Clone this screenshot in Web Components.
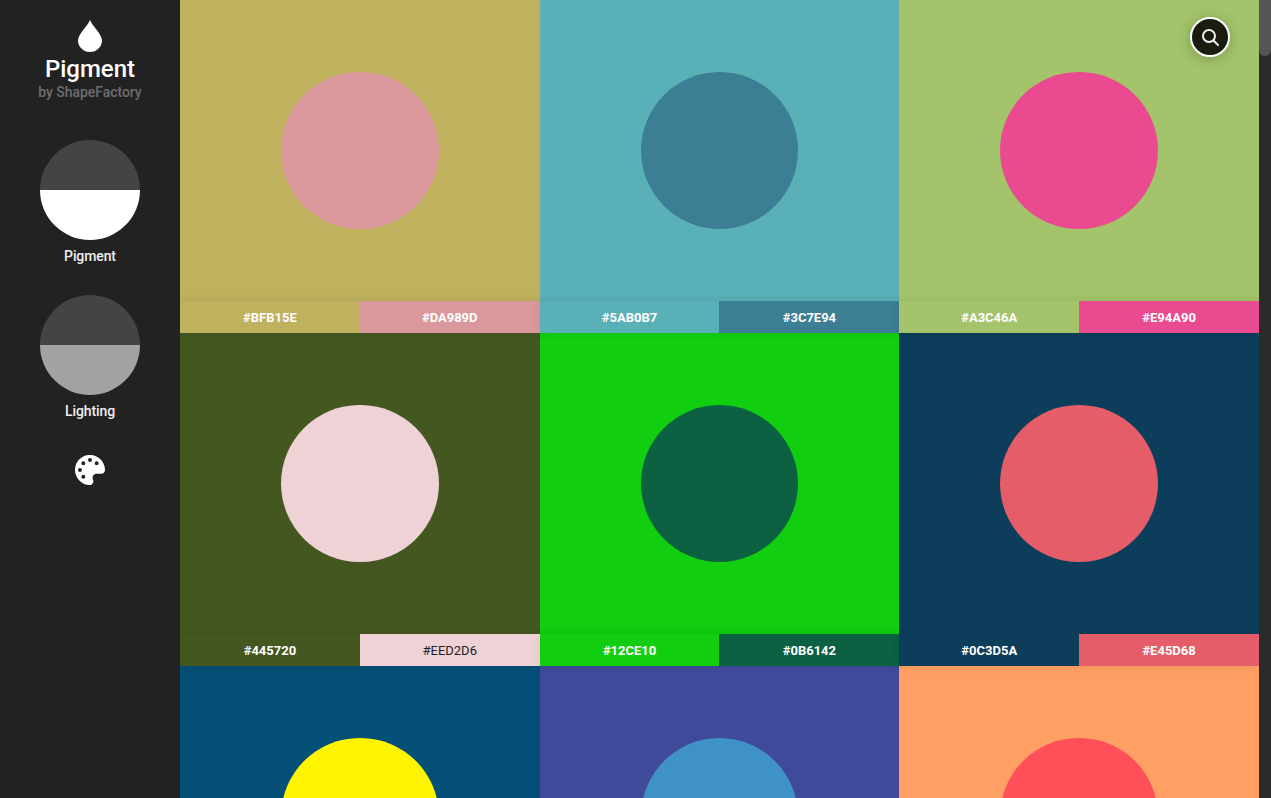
<!DOCTYPE html>
<html lang="en">
<head>
<meta charset="utf-8">
<title>Pigment by ShapeFactory</title>
<style>
html,body{margin:0;height:100%;overflow:hidden;background:#222;font-family:Roboto,"Liberation Sans",sans-serif}
</style>
</head>
<body>
<pigment-app>
  <pigment-sidebar slot="side">
    <pigment-logo></pigment-logo>
    <pigment-dial color="#fff">Pigment</pigment-dial>
    <pigment-dial color="#a2a2a2">Lighting</pigment-dial>
    <pigment-palette></pigment-palette>
  </pigment-sidebar>
  <pigment-grid slot="main">
    <pigment-card bg="#BFB15E" fg="#DA989D"></pigment-card>
    <pigment-card bg="#5AB0B7" fg="#3C7E94"></pigment-card>
    <pigment-card bg="#A3C46A" fg="#E94A90"></pigment-card>
    <pigment-card bg="#445720" fg="#EED2D6" fg-ink="#222"></pigment-card>
    <pigment-card bg="#12CE10" fg="#0B6142"></pigment-card>
    <pigment-card bg="#0C3D5A" fg="#E45D68"></pigment-card>
    <pigment-card bg="#034F75" fg="#FFF500" bare></pigment-card>
    <pigment-card bg="#3F4A9B" fg="#3F92C6" bare></pigment-card>
    <pigment-card bg="#FF9F63" fg="#FF5059" bare></pigment-card>
  </pigment-grid>
  <pigment-search slot="main"></pigment-search>
  <pigment-rail slot="rail"></pigment-rail>
</pigment-app>
<script>
function def(name, css, html){
  customElements.define(name, class extends HTMLElement{
    connectedCallback(){
      if(this.shadowRoot) return;
      const r=this.attachShadow({mode:'open'});
      r.innerHTML='<style>'+css+'</style>'+(typeof html==='function'?html(this):html);
    }
  });
}
def('pigment-app',
 ':host{display:grid;grid-template-columns:180px 1fr 12px;height:100vh;overflow:hidden}.m{position:relative;overflow:hidden;min-width:0}',
 '<slot name="side"></slot><div class="m"><slot name="main"></slot></div><slot name="rail"></slot>');
def('pigment-sidebar',
 ':host{display:flex;flex-direction:column;align-items:center;background:#222;padding-top:20px;box-sizing:border-box;height:100%}',
 '<slot></slot>');
def('pigment-logo',
 ':host{display:flex;flex-direction:column;align-items:center;color:#fff;margin-bottom:39px}svg{display:block;width:24px;height:32px}.t{font:500 24px/28px Roboto,sans-serif;margin-top:3px}.s{font:500 14px/17px Roboto,sans-serif;color:#6e6e6e;margin-top:1px;letter-spacing:-.05px}',
 '<svg viewBox="0 0 24 32"><path fill="#fff" d="M12 0C13.600 4.800 24 14.500 24 20.200 24 26.800 18.600 32 12 32 5.400 32 0 26.800 0 20.200 0 14.500 10.400 4.800 12 0Z"/></svg><div class="t">Pigment</div><div class="s">by ShapeFactory</div>');
def('pigment-dial',
 ':host{display:flex;flex-direction:column;align-items:center;color:#eee;margin-bottom:16px}.c{width:100px;height:100px;border-radius:50%;overflow:hidden;display:grid;grid-template-rows:1fr 1fr;margin-bottom:7px}.a{background:#444}.l{font:500 14px/18px Roboto,sans-serif;height:32px;letter-spacing:-.1px}',
 el=>`<div class="c"><div class="a"></div><div style="background:${el.getAttribute('color')}"></div></div><div class="l"><slot></slot></div>`);
def('pigment-palette',
 ':host{display:block;width:30px;height:30px;margin-top:5px}svg{display:block;width:30px;height:30px}',
 `<svg viewBox="0 0 512 512"><path fill="#fff" fill-rule="evenodd" d="M204.300 5C104.900 24.400 24.800 104.300 5.200 203.400c-37 187 131.700 326.400 258.800 306.700 41.200-6.400 61.400-54.600 42.500-91.700-23.100-45.400 9.900-98.400 60.900-98.400h79.700c35.800 0 64.800-29.600 64.900-65.300C511.500 97.100 368.100-26.900 204.300 5Z
M108 142a34 34 0 1 0 68 0a34 34 0 1 0-68 0Z M222 85a34 34 0 1 0 68 0a34 34 0 1 0-68 0Z M336 142a34 34 0 1 0 68 0a34 34 0 1 0-68 0Z M51 256a34 34 0 1 0 68 0a34 34 0 1 0-68 0Z M108 370a34 34 0 1 0 68 0a34 34 0 1 0-68 0Z"/></svg>`);
def('pigment-grid',
 ':host{display:grid;grid-template-columns:repeat(3,1fr);grid-auto-rows:333px}',
 '<slot></slot>');
def('pigment-card',
 ':host{display:flex;flex-direction:column;min-width:0}.sq{height:301px;display:flex;align-items:center;justify-content:center;flex:none}.dot{width:43.8%;aspect-ratio:1;border-radius:50%}.sw{display:grid;grid-template-columns:1fr 1fr;height:32px;position:relative;box-shadow:0 0 10px rgba(0,0,0,.09)}.sw div{display:flex;align-items:center;justify-content:center;font:700 13px/16px Roboto,sans-serif;color:#fff;padding-top:1px;box-sizing:border-box}',
 el=>{
  const b=el.getAttribute('bg'),f=el.getAttribute('fg'),ink=el.getAttribute('fg-ink');
  const sw=el.hasAttribute('bare')?'':`<div class="sw"><div style="background:${b}">${b}</div><div style="background:${f};${ink?`color:${ink};font-weight:400`:''}">${f}</div></div>`;
  return `<div class="sq" style="background:${b}"><div class="dot" style="background:${f}"></div></div>${sw}`;
 });
def('pigment-search',
 ':host{position:absolute;top:17px;right:29px;width:40px;height:40px;box-sizing:border-box;border:2px solid #fff;border-radius:50%;background:#1a1c10;box-shadow:0 2px 14px rgba(0,0,0,.22);display:flex;align-items:center;justify-content:center}svg{display:block;width:20px;height:20px}',
 '<svg viewBox="0 0 20 20" fill="none" stroke="#eee" stroke-width="2"><circle cx="9" cy="9" r="6"/><path d="M13.500 13.500 18 18" stroke-linecap="round"/></svg>');
def('pigment-rail',
 ':host{display:block;background:#2b2b2b;height:100%}.t{height:56px;background:#555;border-radius:0 0 6px 6px}',
 '<div class="t"></div>');
</script>
</body>
</html>
